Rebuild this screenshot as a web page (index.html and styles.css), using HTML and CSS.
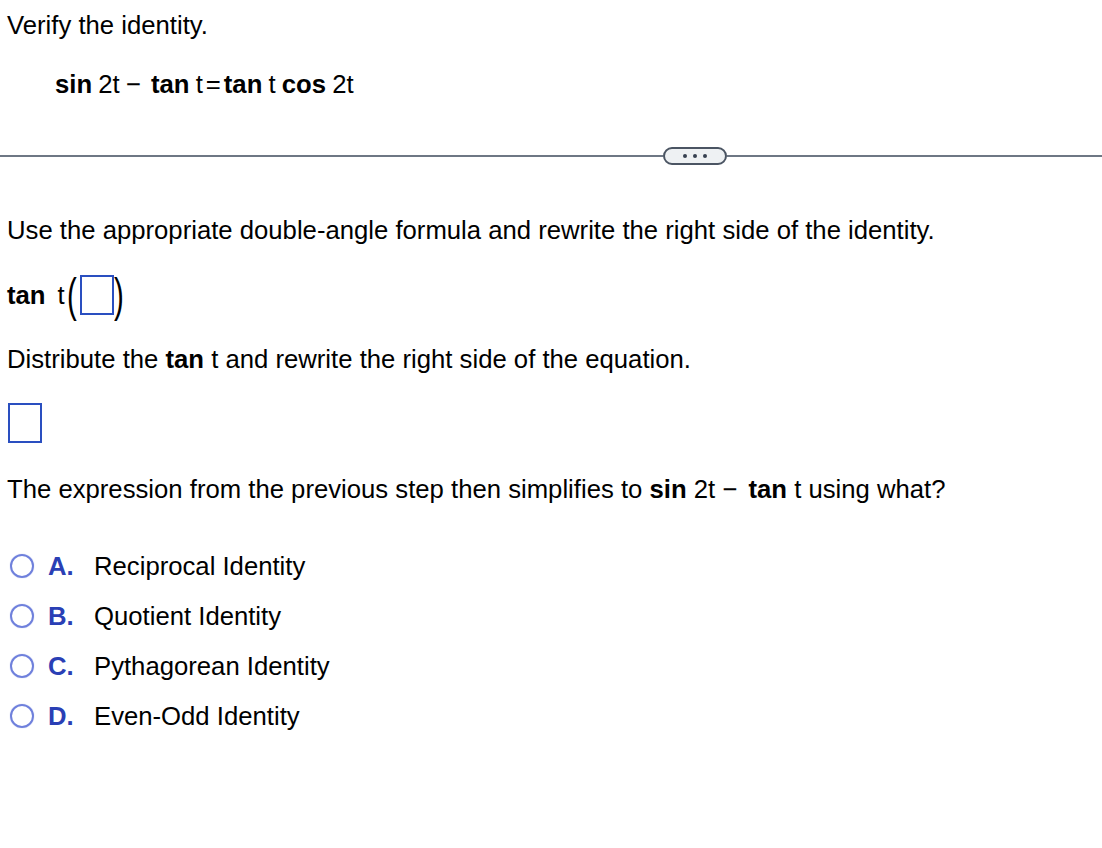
FILE: index.html
```html
<!DOCTYPE html>
<html>
<head>
<meta charset="utf-8">
<link rel="stylesheet" href="styles.css">
</head>
<body>
<div class="page">
  <p class="line title">Verify the identity.</p>
  <p class="line eq"><b>sin</b> 2t <span class="minus">&minus;</span> <b>tan</b> t<span class="eqs">=</span><b>tan</b> t <b>cos</b> 2t</p>

  <div class="divider">
    <div class="rule"></div>
    <div class="pill"><span class="dot"></span><span class="dot"></span><span class="dot"></span></div>
    <div class="rule"></div>
  </div>

  <p class="line step1">Use the appropriate double-angle formula and rewrite the right side of the identity.</p>
  <div class="line expr"><b>tan</b><span class="t">t</span><span class="paren left">(</span><span class="box"></span><span class="paren right">)</span></div>

  <p class="line step2">Distribute the <b>tan</b> t and rewrite the right side of the equation.</p>
  <div class="line box-row"><span class="box"></span></div>

  <p class="line step3">The expression from the previous step then simplifies to <b>sin</b> 2t <span class="minus">&minus;</span> <b>tan</b> t using what?</p>

  <ul class="options">
    <li class="opt"><span class="radio"></span><span class="letter">A.</span><span class="label">Reciprocal Identity</span></li>
    <li class="opt"><span class="radio"></span><span class="letter">B.</span><span class="label">Quotient Identity</span></li>
    <li class="opt"><span class="radio"></span><span class="letter">C.</span><span class="label">Pythagorean Identity</span></li>
    <li class="opt"><span class="radio"></span><span class="letter">D.</span><span class="label">Even-Odd Identity</span></li>
  </ul>
</div>
</body>
</html>
```

FILE: styles.css
```css
html, body {
  margin: 0;
  padding: 0;
  background: #fff;
}
body {
  font-family: "Liberation Sans", Arial, sans-serif;
  font-size: 25.7px;
  color: #000;
}
.page {
  padding-top: 10px;
}
.line {
  margin: 0;
  padding-left: 7px;
  line-height: 30px;
}
b { font-weight: bold; }
.minus { margin-right: 4px; }
.eqs { margin: 0 3px; }
.eq {
  padding-left: 55px;
  margin-top: 29px;
  word-spacing: -1px;
}
.divider {
  display: flex;
  align-items: center;
  margin-top: 48px;
  height: 18px;
}
.rule {
  flex: 1;
  height: 2px;
  background: #6e7784;
}
.rule:first-child { flex: 0 0 663px; }
.pill {
  box-sizing: border-box;
  width: 64px;
  height: 18px;
  border: 2px solid #4b5563;
  border-radius: 9px;
  background: #eef1f3;
  display: flex;
  align-items: center;
  justify-content: center;
  gap: 6px;
}
.dot {
  width: 4px;
  height: 4px;
  border-radius: 50%;
  background: #374151;
}
.step1 { margin-top: 50px; }
.expr {
  margin-top: 30px;
  display: flex;
  align-items: center;
  height: 40px;
}
.expr .t { margin-left: 12px; }
.paren {
  display: inline-block;
  font-size: 42px;
  line-height: 40px;
  transform: scale(0.7, 1.12);
  font-weight: 300;
}
.paren.left { margin-left: 0; margin-right: 1px; }
.paren.right { margin-left: -2px; }
.box {
  display: inline-block;
  box-sizing: border-box;
  width: 34px;
  height: 40px;
  border: 2px solid #2a4fc0;
  background: #fff;
}
.step2 { margin-top: 29px; }
.box-row {
  margin-top: 29px;
  height: 40px;
  padding-left: 8px;
}
.step3 { margin-top: 31px; }
.options {
  list-style: none;
  margin: 37px 0 0 0;
  padding: 0;
}
.opt {
  display: flex;
  align-items: center;
  height: 50px;
}
.radio {
  box-sizing: border-box;
  width: 24px;
  height: 24px;
  border: 2px solid #6f80dc;
  border-radius: 50%;
  margin-left: 10px;
  box-shadow: 0 0 1px #9aa8e8;
}
.letter {
  color: #2a3fb5;
  font-weight: bold;
  margin-left: 14px;
  width: 46px;
}
```
